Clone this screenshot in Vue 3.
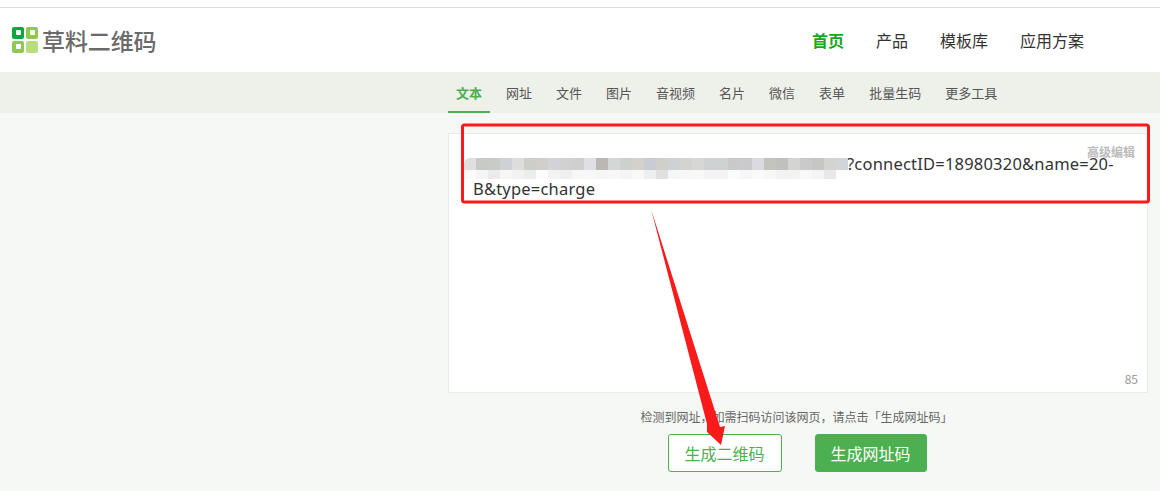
<template>
  <div class="page">
    <header class="site-header">
      <div class="logo">
        <div class="logo-mark">
          <i class="cell dark"></i>
          <i class="cell mid"></i>
          <i class="cell mid"></i>
          <i class="cell pale"></i>
        </div>
        <span class="logo-text">草料二维码</span>
      </div>
      <nav class="main-nav">
        <a v-for="item in navItems" :key="item" :class="{ active: item === '首页' }">{{ item }}</a>
      </nav>
    </header>

    <div class="tab-bar">
      <div class="tabs">
        <a v-for="tab in tabs" :key="tab" class="tab" :class="{ active: tab === '文本' }">{{ tab }}</a>
      </div>
    </div>

    <main class="content">
      <section class="editor">
        <span class="advanced">高级编辑</span>
        <p class="editor-text">
          <span class="masked">
            <span class="mosaic">
              <i v-for="(c, i) in mosaicTop" :key="'t' + i" class="top" :style="{ background: c }"></i>
              <i v-for="(c, i) in mosaicBottom" :key="'b' + i" class="bottom" :style="{ background: c }"></i>
            </span>
          </span>?connectID=18980320&amp;name=20-<br />B&amp;type=charge
        </p>
        <span class="counter">85</span>
      </section>
      <p class="hint">检测到网址，如需扫码访问该网页，请点击「生成网址码」</p>
      <div class="actions">
        <button class="btn outline">生成二维码</button>
        <button class="btn solid">生成网址码</button>
      </div>
    </main>

    <!-- red annotation drawn over the screenshot -->
    <svg class="annotation" width="1160" height="491" viewBox="0 0 1160 491">
      <rect x="462.5" y="125" width="686" height="77" rx="2" fill="none" stroke="#fb1a1a" stroke-width="3" />
      <polygon points="651,209 707,424 707,432 721,445 725,426 720,427" fill="#fb1a1a" />
    </svg>
  </div>
</template>

<script setup>
const navItems = ['首页', '产品', '模板库', '应用方案']
const tabs = ['文本', '网址', '文件', '图片', '音视频', '名片', '微信', '表单', '批量生码', '更多工具']

// colours of the blurred out part of the url
const mosaicTop = [
  '#e0dfe0', '#c8cac7', '#c9cbc6', '#cfd2d4', '#dfdcde', '#cdcdca', '#d0cfcb', '#d1d3d6',
  '#d0d1d2', '#cfcfcf', '#dfdfe6', '#bcb7b3', '#d3d7d8', '#cdd0cc', '#d4d1cb', '#c8ccd3',
  '#d0cfcb', '#cdd3d5', '#d3d4d0', '#d8d7d5', '#cfd2d3', '#cfd2d3', '#c9cac7', '#c8cacb',
  '#d9dbdf', '#c3c4bd', '#c0c1bf', '#d3d5d2', '#c9cacb', '#c7c5c5', '#d3d4cf', '#d0d5d7'
]
const mosaicBottom = [
  '#fafafa', '#f5f5f5', '#ebebeb', '#f6f6f6', '#f2f2f0', '#eceeec', '#fbfcfc', '#f3f3f4',
  '#efefef', '#f7f7f7', '#f8f8f8', '#f6f6f6', '#f7f7f7', '#f5f5f5', '#f8f8f8', '#eeeeee',
  '#dfe0e2', '#f5f6f5', '#f6f7f6', '#f7f8f7', '#f3f4f3', '#f4f4f4', '#fafbfb', '#f6f7f5',
  '#f8f9f8', '#f7f7f7', '#f2f2f2', '#f3f3f3', '#f8f8f8', '#f5f5f5', '#e8e8e8', '#fdfdfd'
]
</script>

<style>
html,
body {
  margin: 0;
  height: 491px;
  overflow: hidden;
}
</style>

<style scoped>
.page {
  position: relative;
  width: 1160px;
  height: 491px;
  background: #f6f8f5;
  font-family: "Noto Sans CJK SC", "Noto Sans", sans-serif;
  overflow: hidden;
}

.site-header {
  display: flex;
  align-items: center;
  justify-content: space-between;
  box-sizing: border-box;
  height: 72px;
  padding: 7px 76px 0 12px;
  background: #fff;
  position: relative;
}

.site-header::before {
  content: "";
  position: absolute;
  top: 7px;
  left: 0;
  right: 0;
  height: 1px;
  background: #dedede;
}

.logo {
  display: flex;
  align-items: center;
  gap: 4px;
}

.logo-mark {
  display: grid;
  grid-template-columns: 12px 12px;
  grid-template-rows: 12px 12px;
  gap: 2px;
}

.cell {
  display: block;
  position: relative;
  border-radius: 2px;
}

.cell::after {
  content: "";
  position: absolute;
  top: 3px;
  left: 3.5px;
  width: 5px;
  height: 5px;
  background: #fff;
  border-radius: 1px;
}

.cell.dark {
  background: #0aa63e;
}

.cell.mid {
  background: #8fc950;
}

.cell.pale {
  background: #b6de7e;
}

.cell.pale::after {
  display: none;
}

.logo-text {
  font-size: 23px;
  line-height: 30px;
  font-weight: 500;
  color: #6a6a6a;
  letter-spacing: -0.1px;
}

.main-nav {
  display: flex;
  gap: 32px;
  font-size: 16px;
  color: #333;
}

.main-nav a.active {
  color: #17a81d;
  font-weight: 700;
}

.tab-bar {
  height: 41px;
  background: #eef0ea;
}

.tabs {
  display: flex;
  gap: 8px;
  margin-left: 448px;
}

.tab {
  box-sizing: border-box;
  height: 41px;
  padding: 0 8px;
  font-size: 13px;
  line-height: 41px;
  color: #555;
}

.tab.active {
  color: #4caf50;
  font-weight: 700;
  border-bottom: 2px solid #4caf50;
}

.content {
  width: 700px;
  margin-left: 448px;
  padding-top: 20px;
}

.editor {
  position: relative;
  box-sizing: border-box;
  height: 260px;
  padding: 17px 24px 0;
  background: #fff;
  border: 1px solid #e8ebe8;
}

.advanced {
  position: absolute;
  top: 10px;
  right: 12px;
  font-size: 12px;
  line-height: 16px;
  font-weight: 700;
  color: #bbb;
}

.editor-text {
  margin: 0;
  font-family: "Noto Sans", "Noto Sans CJK SC", sans-serif;
  font-size: 16.5px;
  letter-spacing: 0.2px;
  line-height: 25px;
  color: #333;
}

.masked {
  display: inline-block;
  position: relative;
  width: 374px;
  height: 1px;
}

.mosaic {
  position: absolute;
  left: -9px;
  top: -11px;
  display: grid;
  grid-template-columns: repeat(32, 12px);
  grid-template-rows: 12px 9px;
  border-radius: 6px 0 8px 0;
  overflow: hidden;
}

.mosaic i {
  display: block;
}

.counter {
  position: absolute;
  right: 9px;
  bottom: 5px;
  font-size: 12px;
  line-height: 16px;
  color: #999;
}

.hint {
  margin: 15px 0 0;
  font-size: 12px;
  line-height: 18px;
  text-align: center;
  color: #666;
  padding-right: 3px;
}

.actions {
  display: flex;
  justify-content: center;
  gap: 33px;
  margin-top: 8px;
  padding-right: 2px;
}

.btn {
  box-sizing: border-box;
  height: 38px;
  border-radius: 3px;
  font-family: inherit;
  font-size: 16px;
  padding: 0;
}

.btn.outline {
  width: 114px;
  background: #fff;
  border: 1px solid #4caf50;
  color: #4caf50;
}

.btn.solid {
  width: 112px;
  background: #4caf50;
  border: 1px solid #4caf50;
  color: #fff;
}

.annotation {
  position: absolute;
  top: 0;
  left: 0;
  pointer-events: none;
}
</style>
